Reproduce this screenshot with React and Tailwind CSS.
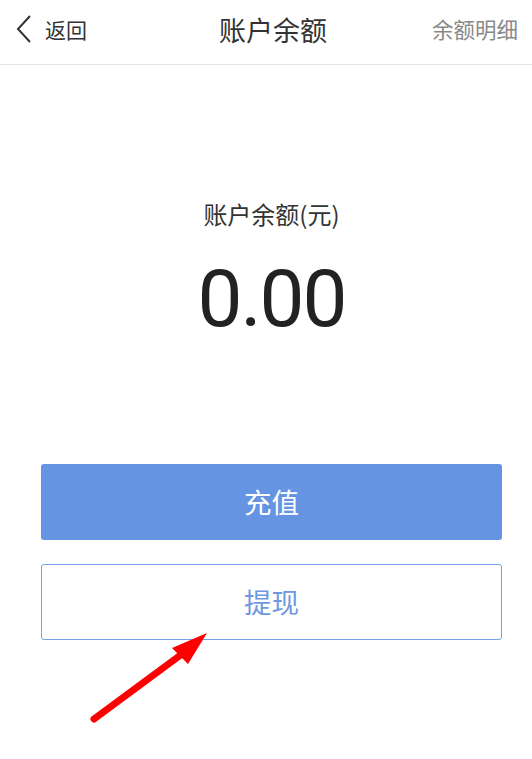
import React from 'react';

const cjk = { fontFamily: '"Noto Sans CJK SC", "Noto Sans", sans-serif' };

export default function App() {
  return (
    <div className="relative w-[532px] h-[759px] bg-white overflow-hidden" style={cjk}>
      {/* Header */}
      <div className="flex items-center justify-between h-[65px] border-b border-[#e5e5e5] pl-[15px] pr-[14px] pb-[6px]">
        <div className="flex items-center w-[120px]">
          <svg width="18" height="28" viewBox="0 0 18 28" className="mr-[12px]">
            <path d="M15 1 L3 14 L15 27" fill="none" stroke="#333" strokeWidth="2" />
          </svg>
          <span className="text-[21px] text-[#333] leading-none">返回</span>
        </div>
        <div className="text-[27px] text-[#333] ml-[13px] leading-none">账户余额</div>
        <div className="w-[120px] text-right text-[21.5px] text-[#888] leading-none">余额明细</div>
      </div>

      {/* Balance */}
      <div className="flex flex-col items-center pl-[41px] pr-[30px] pt-[132px]">
        <div className="text-[24px] text-[#333] leading-[34px]">账户余额(元)</div>
        <div
          className="text-[80px] text-[#222] leading-none mt-[28px] tracking-[-2px]"
          style={{ fontFamily: 'Roboto, "Noto Sans", sans-serif' }}
        >
          0.00
        </div>
      </div>

      {/* Buttons */}
      <div className="flex flex-col gap-[24px] pl-[41px] pr-[30px] mt-[125px]">
        <button className="h-[76px] w-full rounded-[3px] bg-[#6494e2] text-white text-[27.5px]">
          充值
        </button>
        <button className="h-[76px] w-full rounded-[3px] border border-[#7a9fe3] bg-white text-[#6e98e0] text-[27.5px]">
          提现
        </button>
      </div>

      {/* Annotation arrow */}
      <svg className="absolute left-0 top-0 pointer-events-none" width="532" height="759">
        <line x1="94" y1="719" x2="182" y2="654" stroke="#ff0000" strokeWidth="7" strokeLinecap="round" />
        <polygon points="207,633 172,648 188,664" fill="#ff0000" />
      </svg>
    </div>
  );
}
